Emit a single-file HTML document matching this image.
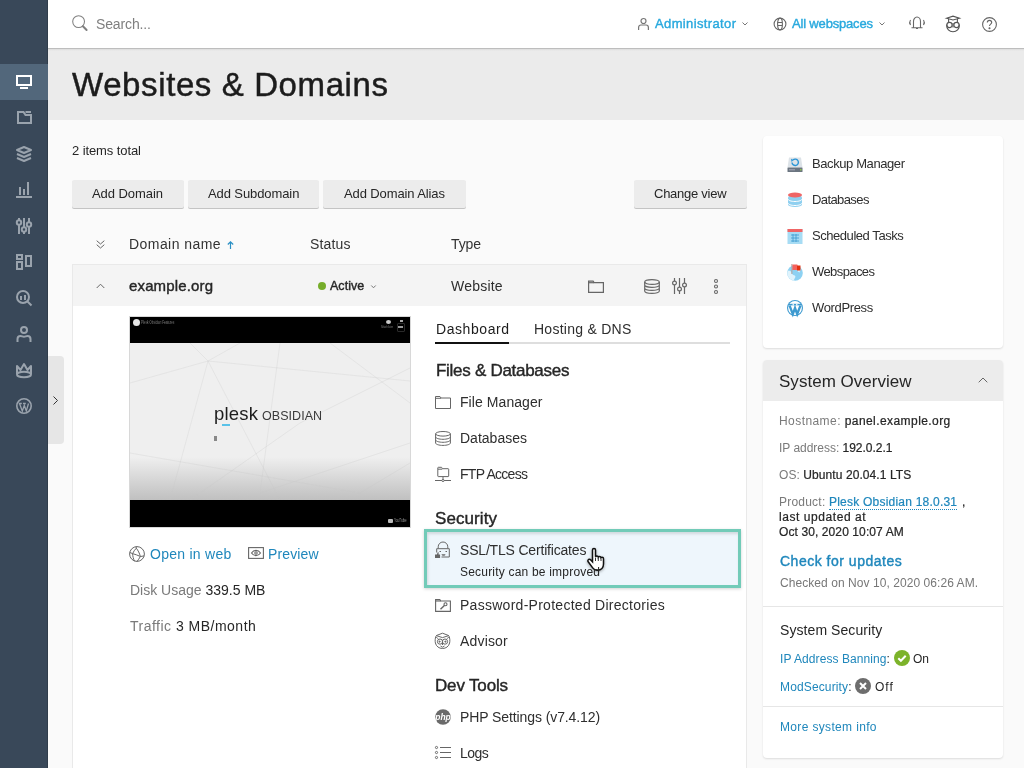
<!DOCTYPE html>
<html><head><meta charset="utf-8">
<style>
*{margin:0;padding:0;box-sizing:border-box}
html,body{width:1024px;height:768px;overflow:hidden;background:#fafafa;font-family:"Liberation Sans",sans-serif}
.a{position:absolute}
.t{position:absolute;white-space:nowrap;will-change:transform;font-family:"Liberation Sans",sans-serif}
svg{position:absolute;overflow:visible}
.btn{position:absolute;top:180px;height:28px;background:#ececec;border-radius:2px;box-shadow:0 1px 0 #c4c4c4}
</style></head><body>
<!-- sidebar -->
<div class="a" style="left:0;top:0;width:48px;height:768px;background:#394859"></div>
<div class="a" style="left:47px;top:0;width:1px;height:768px;background:#303d4b"></div>
<div class="a" style="left:0;top:64px;width:48px;height:36px;background:#52677b"></div>
<!-- sidebar icons -->
<svg style="left:16px;top:74px" width="16" height="16" viewBox="0 0 16 16"><rect x="1" y="2" width="14" height="9" fill="none" stroke="#fff" stroke-width="2"/><rect x="4" y="13" width="8" height="2" fill="#fff"/></svg>
<svg style="left:16px;top:110px" width="16" height="16" viewBox="0 0 16 16" fill="none" stroke="#9aa3ad" stroke-width="2"><path d="M2 2h5.5l2 3H15v8H2z"/><path d="M9.5 2H15" /></svg>
<svg style="left:16px;top:146px" width="16" height="16" viewBox="0 0 16 16" fill="none" stroke="#9aa3ad" stroke-width="2" stroke-linejoin="round"><path d="M8 1L15 4L8 7L1 4z"/><path d="M1 8l7 3l7-3"/><path d="M1 12l7 3l7-3"/></svg>
<svg style="left:16px;top:182px" width="16" height="16" viewBox="0 0 16 16" fill="#9aa3ad"><rect x="0" y="14" width="16" height="2"/><rect x="3" y="5" width="2" height="8"/><rect x="7" y="7" width="2" height="6"/><rect x="11" y="0" width="2" height="13"/></svg>
<svg style="left:16px;top:218px" width="16" height="16" viewBox="0 0 16 16" fill="none" stroke="#9aa3ad" stroke-width="2"><path d="M3 0v2M3 7v9M8 0v9M8 14v2M13 0v4M13 9v7"/><circle cx="3" cy="4.5" r="2.2"/><circle cx="8" cy="11.5" r="2.2"/><circle cx="13" cy="6.5" r="2.2"/></svg>
<svg style="left:16px;top:254px" width="16" height="16" viewBox="0 0 16 16" fill="none" stroke="#9aa3ad" stroke-width="2"><rect x="1" y="1" width="5" height="4"/><rect x="1" y="8" width="5" height="7"/><rect x="10" y="2" width="5" height="10"/></svg>
<svg style="left:16px;top:290px" width="16" height="16" viewBox="0 0 16 16" fill="none" stroke="#9aa3ad" stroke-width="2"><circle cx="7" cy="7" r="6"/><path d="M11.5 11.5L15.5 15.5"/><path d="M5 6v4M9 5v5"/></svg>
<svg style="left:16px;top:326px" width="16" height="16" viewBox="0 0 16 16" fill="none" stroke="#9aa3ad" stroke-width="2"><circle cx="8" cy="4" r="3"/><path d="M1.5 16v-3c0-2 1.5-3 3-3c1.5 0 2 .8 3.5 .8s2-.8 3.5-.8c1.5 0 3 1 3 3v3"/></svg>
<svg style="left:16px;top:362px" width="16" height="16" viewBox="0 0 16 16" fill="none" stroke="#9aa3ad" stroke-width="2" stroke-linejoin="round"><path d="M1 12V4l3.5 4L8 2l3.5 6L15 4v8"/><ellipse cx="8" cy="12.5" rx="7" ry="2.8"/></svg>
<svg style="left:16px;top:398px" width="16" height="16" viewBox="0 0 16 16" fill="none" stroke="#9aa3ad" stroke-width="1.6"><circle cx="8" cy="8" r="7.2"/><path d="M3.5 5.5l2.8 7.5l2-5.5l2 5.5l2.2-7.5M2.8 5.5h3M7 5.5h2.8" stroke-width="1.3"/></svg>
<!-- collapse tab -->
<div class="a" style="left:48px;top:356px;width:16px;height:88px;background:#e6e6e6;border-radius:0 4px 4px 0"></div>
<svg style="left:52.5px;top:396px" width="5" height="9" viewBox="0 0 5 9" fill="none" stroke="#333" stroke-width="1"><path d="M0.5 0.5L4.5 4.5L0.5 8.5"/></svg>

<!-- header -->
<div class="a" style="left:48px;top:0;width:976px;height:48px;background:#fff"></div>
<div class="a" style="left:48px;top:48px;width:976px;height:1px;background:#bdbdbd"></div>
<div class="a" style="left:48px;top:49px;width:976px;height:2px;background:linear-gradient(#dcdcdc,#ebebeb)"></div>
<svg style="left:72px;top:15px" width="16" height="17" viewBox="0 0 16 17" fill="none" stroke="#808080" stroke-width="1.05"><circle cx="6.6" cy="6.6" r="5.9"/><path d="M10.9 11.2L14.6 15" stroke-width="2" stroke-linecap="round"/></svg>
<svg style="left:638px;top:18px" width="11" height="12" viewBox="0 0 11 12" fill="none" stroke="#777" stroke-width="1.2"><circle cx="5.5" cy="3" r="2.5"/><path d="M0.6 12V9.5c0-1.5 1-2.5 2.3-2.5h5.2c1.3 0 2.3 1 2.3 2.5V12"/></svg>
<svg style="left:742px;top:22px" width="6" height="4" viewBox="0 0 6 4" fill="none" stroke="#777" stroke-width="1"><path d="M0.5 0.5L3 3L5.5 0.5"/></svg>
<svg style="left:773px;top:17px" width="14" height="14" viewBox="0 0 14 14" fill="none" stroke="#666" stroke-width="1.1"><circle cx="7" cy="7" r="5.9"/><ellipse cx="7" cy="7" rx="2.4" ry="5.9"/><path d="M4.8 5.5h4.4M4.8 8.5h4.4"/></svg>
<svg style="left:879px;top:22px" width="6" height="4" viewBox="0 0 6 4" fill="none" stroke="#777" stroke-width="1"><path d="M0.5 0.5L3 3L5.5 0.5"/></svg>
<svg style="left:909px;top:16px" width="16" height="14" viewBox="0 0 16 14" fill="none" stroke="#666" stroke-width="1.1"><path d="M4.5 11.5V5.5c0-2.5 1.5-4.5 3.5-4.5s3.5 2 3.5 4.5v6M2.5 11.8h11M7 12.5h2"/><path d="M1.5 4c-1 1.5-1 3.5 0 5M14.5 4c1 1.5 1 3.5 0 5"/></svg>
<svg style="left:945px;top:15px" width="16" height="18" viewBox="0 0 16 18" fill="none" stroke="#555" stroke-width="1.1"><path d="M1.5 3.3L8 1.2l6.5 2.1L8 5z" /><path d="M3.6 4v4M12.4 4v4"/><circle cx="4.5" cy="10" r="2.6"/><circle cx="11.5" cy="10" r="2.6"/><path d="M1.6 9.5c-.2 4.5 2.8 7.3 6.4 7.3s6.6-2.8 6.4-7.3M8 8v4.5" /></svg>
<svg style="left:982px;top:17px" width="15" height="15" viewBox="0 0 15 15" fill="none" stroke="#666" stroke-width="1.1"><circle cx="7.5" cy="7.5" r="6.9"/><path d="M5.3 5.6c0-1.3 1-2.2 2.2-2.2s2.2.9 2.2 2.1c0 1.6-2.2 1.8-2.2 3.6"/><circle cx="7.5" cy="11.2" r=".5" fill="#666"/></svg>

<!-- page header -->
<div class="a" style="left:48px;top:51px;width:976px;height:69px;background:#ebebeb"></div>

<!-- buttons -->
<div class="btn" style="left:72px;width:112px"></div>
<div class="btn" style="left:188px;width:131px"></div>
<div class="btn" style="left:323px;width:143px"></div>
<div class="btn" style="left:634px;width:113px"></div>

<!-- table header -->
<svg style="left:96px;top:240px" width="9" height="9" viewBox="0 0 9 9" fill="none" stroke="#666" stroke-width="1"><path d="M0.7 0.7L4.5 4L8.3 0.7M0.7 4.7L4.5 8L8.3 4.7"/></svg>
<svg style="left:227px;top:241px" width="7" height="8" viewBox="0 0 7 8" fill="none" stroke="#2a8fc4" stroke-width="1.2"><path d="M3.5 8V1M0.8 3.5L3.5 0.8L6.2 3.5"/></svg>

<!-- row -->
<div class="a" style="left:72px;top:264px;width:675px;height:504px;background:#fff;border:1px solid #e9e9e9;border-bottom:none"></div>
<div class="a" style="left:73px;top:265px;width:673px;height:41px;background:#f4f4f4"></div>
<svg style="left:96px;top:283px" width="9" height="6" viewBox="0 0 9 6" fill="none" stroke="#666" stroke-width="1"><path d="M0.7 5L4.5 1.2L8.3 5"/></svg>
<div class="a" style="left:318px;top:282px;width:8px;height:8px;border-radius:50%;background:#76ad2a"></div>
<svg style="left:371px;top:285px" width="5" height="4" viewBox="0 0 5 4" fill="none" stroke="#777" stroke-width="1"><path d="M0.3 0.5L2.5 2.8L4.7 0.5"/></svg>
<svg style="left:588px;top:280px" width="16" height="13" viewBox="0 0 16 13" fill="none" stroke="#666" stroke-width="1.2"><path d="M0.6 1.2h4.5l1 1.5h9.3v9.7H0.6z"/><path d="M0.6 2.7h5.5"/></svg>
<svg style="left:644px;top:279px" width="16" height="15" viewBox="0 0 16 15" fill="none" stroke="#666" stroke-width="1.2"><ellipse cx="8" cy="3" rx="7.3" ry="2.4"/><path d="M0.7 3v9c0 1.3 3.3 2.4 7.3 2.4s7.3-1.1 7.3-2.4V3M0.7 6c0 1.3 3.3 2.4 7.3 2.4s7.3-1.1 7.3-2.4M0.7 9c0 1.3 3.3 2.4 7.3 2.4s7.3-1.1 7.3-2.4"/></svg>
<svg style="left:672px;top:278px" width="16" height="16" viewBox="0 0 16 16" fill="none" stroke="#666" stroke-width="1.2"><path d="M2.5 0v3M2.5 7v9M7.5 0v9M7.5 13v3M12.5 0v5M12.5 9v7"/><circle cx="2.5" cy="5" r="1.9"/><circle cx="7.5" cy="11" r="1.9"/><circle cx="12.5" cy="7" r="1.9"/></svg>
<svg style="left:713px;top:279px" width="6" height="15" viewBox="0 0 6 15" fill="none" stroke="#666" stroke-width="1.1"><circle cx="3" cy="2" r="1.5"/><circle cx="3" cy="7.5" r="1.5"/><circle cx="3" cy="13" r="1.5"/></svg>

<!-- screenshot -->
<div class="a" style="left:129px;top:316px;width:282px;height:212px;background:#d8d8d8"></div>
<div class="a" style="left:130px;top:317px;width:280px;height:210px;background:linear-gradient(#efefef 0px,#efefef 140px,#c0c0c0 183px);overflow:hidden">
  <svg style="left:0;top:26px" width="280" height="157" viewBox="0 0 280 157" fill="none" stroke="rgba(200,200,200,0.45)" stroke-width="0.6"><path d="M0 40L78 18L280 38M78 18L40 157M78 18L150 157M150 0L130 150L280 100M280 25L170 80L60 157M60 0L78 18L110 0M0 110L230 150L280 120M200 0L280 60"/></svg>
  <div class="a" style="left:0;top:0;width:280px;height:26px;background:#000"></div>
  <div class="a" style="left:0;top:183px;width:280px;height:27px;background:#000"></div>
  <div class="a" style="left:2.5px;top:2px;width:7px;height:7px;border-radius:50%;background:#e6e6e6"></div>
  <div class="t" style="left:11px;top:3px;font-size:4.5px;line-height:6px;color:#777;transform-origin:0 0;transform:scaleX(0.68)">Plesk Obsidian Features</div>
  <div class="a" style="left:256px;top:3px;width:5px;height:4px;border-radius:50%;background:#ccc"></div>
  <div class="t" style="left:251px;top:8px;font-size:4px;line-height:4px;color:#777;transform-origin:0 0;transform:scaleX(0.6)">Watch later</div>
  <div class="a" style="left:266.5px;top:6px;width:8px;height:9px;border:1px solid #2a2a2a;border-radius:1px"></div>
  <div class="a" style="left:268px;top:9px;width:5px;height:2px;background:#999"></div>
  <div class="a" style="left:270px;top:3px;width:3px;height:2px;background:#aaa"></div>
  <div class="a" style="left:258px;top:202px;width:5px;height:4px;background:#bbb;border-radius:1px"></div>
  <div class="t" style="left:263.5px;top:201px;font-size:4.5px;line-height:6px;color:#999;transform-origin:0 0;transform:scaleX(0.7)">YouTube</div>
  <div class="t" style="left:83.6px;top:86.4px;font-size:18.5px;line-height:21px;color:#1d1d1d;letter-spacing:0.2px">plesk</div>
  <div class="t" style="left:131.5px;top:92px;font-size:12.5px;line-height:14px;color:#3a3a3a;letter-spacing:0.05px">OBSIDIAN</div>
  <div class="a" style="left:92px;top:107px;width:8px;height:2px;background:#5ac2e8"></div>
  <div class="a" style="left:84px;top:119px;width:3px;height:5px;background:#888"></div>
</div>

<!-- expanded links icons -->
<svg style="left:129px;top:546px" width="16" height="16" viewBox="0 0 16 16" fill="none" stroke="#666" stroke-width="1"><circle cx="8" cy="8" r="7.4"/><path d="M7.3 2.2C5.8 3.8 4.5 5.5 3.6 7.6M7.3 2.2c1.8 2.2 3.2 5 4.1 8.3M3.6 7.6c2.6.7 5.2 1.7 7.8 2.9M11.4 10.5l3.8-.6M3.6 7.6L.8 6.5M7.3 2.2L7.1.7M3.6 7.6c.1 2.8.8 5.4 2 7.6M11.4 10.5c-1.2 2-2.4 3.7-3.4 4.9"/></svg>
<svg style="left:248px;top:547px" width="16" height="12" viewBox="0 0 16 12" fill="none" stroke="#666" stroke-width="1.1"><rect x="0.6" y="0.6" width="14.8" height="10.8"/><path d="M3.5 6c1.2-1.8 2.7-2.6 4.5-2.6s3.3.8 4.5 2.6c-1.2 1.8-2.7 2.6-4.5 2.6S4.7 7.8 3.5 6z"/><circle cx="8" cy="6" r="1.2"/></svg>

<!-- tabs -->
<div class="a" style="left:435px;top:342px;width:295px;height:2px;background:#dedede"></div>
<div class="a" style="left:435px;top:342px;width:74px;height:2px;background:#111"></div>

<!-- section icons -->
<svg style="left:435px;top:396px" width="16" height="13" viewBox="0 0 16 13" fill="none" stroke="#666" stroke-width="1"><path d="M0.5 0.5h4.5l1 1.5h9.5v10.5H0.5z"/><path d="M0.5 2.3h5.5"/></svg>
<svg style="left:435px;top:431px" width="16" height="15" viewBox="0 0 16 15" fill="none" stroke="#666" stroke-width="1"><ellipse cx="8" cy="2.8" rx="7.4" ry="2.3"/><path d="M0.6 2.8v9.2c0 1.3 3.3 2.4 7.4 2.4s7.4-1.1 7.4-2.4V2.8M0.6 5.9c0 1.3 3.3 2.4 7.4 2.4s7.4-1.1 7.4-2.4M0.6 8.9c0 1.3 3.3 2.4 7.4 2.4s7.4-1.1 7.4-2.4"/></svg>
<svg style="left:435px;top:466px" width="16" height="16" viewBox="0 0 16 16" fill="none" stroke="#666" stroke-width="1"><path d="M2.8 3.2V1.8c0-.3.2-.5.5-.5h3.3l.8 1.4h5.8c.3 0 .5.2.5.5v6.9c0 .3-.2.5-.5.5H3.3c-.3 0-.5-.2-.5-.5z"/><path d="M2.8 3.2h4.4"/><path d="M8 10.6v3M0 14.5h6.9M9.1 14.5H16"/><circle cx="8" cy="14.5" r="1.1"/></svg>
<!-- highlight -->
<div class="a" style="left:424px;top:529px;width:317px;height:59px;border:3px solid #72cbb8;background:#eef6fc;box-shadow:0 1px 3px rgba(0,0,0,.18), inset 1px 2px 3px rgba(0,0,0,.12)"></div>
<svg style="left:434px;top:541px" width="16" height="18" viewBox="0 0 16 18" fill="none" stroke="#666" stroke-width="1"><path d="M4.2 7.3V5.8a4.8 4.8 0 0 1 9.6 0v1.5"/><path d="M2.7 11.5V7.7h12.6v8.3H7.5"/><path d="M5.5 10.5h1.5M11.5 10.5h1.5"/><path d="M7.5 13.3h4a2 1.5 0 0 1-4 0z" fill="#666" stroke="none"/><path d="M1 13.5h1.8l1-2.2h.8v2.2h1.5v3.5H1z" fill="#666" stroke="none"/></svg>
<!-- cursor -->
<svg style="left:587px;top:548px;filter:drop-shadow(0 1px 1.5px rgba(0,0,0,.35))" width="19" height="23" viewBox="0 0 19 23"><path d="M5.5 2c0-1 .7-1.5 1.5-1.5s1.5.5 1.5 1.5v6.8c.3-.6.8-.9 1.4-.9.8 0 1.3.5 1.4 1.2.3-.5.7-.7 1.3-.7.8 0 1.3.6 1.4 1.3.3-.3.6-.5 1.1-.5.8 0 1.4.7 1.4 1.5v5.3c0 3.5-2.4 6.2-5.8 6.2H10c-2 0-3.3-.9-4.3-2.3L1.2 13.8c-.6-.8-.4-1.8.3-2.3.8-.5 1.7-.3 2.3.4l1.7 1.9z" fill="#fff" stroke="#111" stroke-width="1.5"/><path d="M8.5 9.5v3.5M11.3 10v3M14 10.5v2.5" stroke="#333" stroke-width="1"/></svg>
<svg style="left:435px;top:599px" width="16" height="13" viewBox="0 0 16 13" fill="none" stroke="#666" stroke-width="1.1"><path d="M0.6 12.4V0.6h4.2l1 1.4h9.6v10.4z"/><path d="M0.6 2h5.2"/><circle cx="10.5" cy="5.3" r="1.5"/><path d="M9.4 6.4L5.5 10.3" stroke-width="1.4"/></svg>
<svg style="left:434px;top:632px" width="17" height="17" viewBox="0 0 17 17" fill="none" stroke="#666" stroke-width="1"><path d="M2.2 3.6L8.5 1.2l6.3 2.4L8.5 5.6z"/><path d="M1.8 4.5c-.6 2-.9 4.3-.4 6.5.8 3.4 3.6 5.5 7.1 5.5s6.3-2.1 7.1-5.5c.5-2.2.2-4.5-.4-6.5"/><path d="M1.8 4.5l2.2 2.3M15.2 4.5L13 6.8"/><circle cx="6" cy="9.6" r="2.6"/><circle cx="11" cy="9.6" r="2.6"/><circle cx="5.6" cy="9.6" r=".6" fill="#666"/><circle cx="11.4" cy="9.6" r=".6" fill="#666"/><path d="M8.5 9.5v3.5"/><path d="M6.5 14l2 1.2 2-1.2"/></svg>
<svg style="left:435px;top:709px" width="16" height="16" viewBox="0 0 16 16"><circle cx="8" cy="8" r="7.8" fill="#6a6a6a"/><text x="8" y="11.3" text-anchor="middle" font-family="Liberation Sans" font-size="9.5" font-weight="bold" font-style="italic" fill="#fff" textLength="15.5" lengthAdjust="spacingAndGlyphs">php</text></svg>
<svg style="left:435px;top:746px" width="16" height="13" viewBox="0 0 16 13" fill="none" stroke="#666" stroke-width="1"><circle cx="1.5" cy="1.5" r="1.1"/><circle cx="1.5" cy="6.5" r="1.1"/><circle cx="1.5" cy="11.5" r="1.1"/><path d="M5 1.5h11M5 6.5h11M5 11.5h11"/></svg>

<!-- right card 1 -->
<div class="a" style="left:763px;top:136px;width:240px;height:212px;background:#fff;border-radius:4px;box-shadow:0 1px 2px rgba(0,0,0,.12)"></div>
<svg style="left:787px;top:156px" width="16" height="16" viewBox="0 0 16 16"><path d="M2 1.5h12l1.5 10H.5z" fill="#dde3e8"/><rect x="0.5" y="11.5" width="15" height="4.5" rx="0.5" fill="#6b7580"/><rect x="13" y="13" width="1.5" height="1.5" fill="#8bc34a"/><rect x="2" y="13.3" width="6" height="1" fill="#aab"/><path d="M5 6.5a3.2 3.2 0 1 0 1-2.5" fill="none" stroke="#2b95d6" stroke-width="1.4"/><path d="M4 2.8l2.5 1.3l-2 1.8z" fill="#2b95d6"/></svg>
<svg style="left:787px;top:192px" width="16" height="16" viewBox="0 0 16 16"><rect x="1" y="3" width="14" height="12" rx="7" ry="2.5" fill="#8fd0f0"/><path d="M1 7c0 1.4 3.1 2.5 7 2.5s7-1.1 7-2.5M1 11c0 1.4 3.1 2.5 7 2.5s7-1.1 7-2.5" fill="none" stroke="#fff" stroke-width="1"/><ellipse cx="8" cy="3" rx="7" ry="2.5" fill="#f06565"/></svg>
<svg style="left:787px;top:228px" width="16" height="16" viewBox="0 0 16 16"><rect x="0.5" y="1" width="15" height="15" fill="#a7dcf4"/><rect x="0.5" y="1" width="15" height="3" fill="#f06565"/><path d="M4 7h8M4 10h8M4 13h8M6 6v8M9 6v8" stroke="#3a9bd0" stroke-width="0.8"/></svg>
<svg style="left:787px;top:264px" width="16" height="17" viewBox="0 0 16 17"><circle cx="8" cy="9" r="7.8" fill="#8dd1f2"/><path d="M1.5 6.5c1.5.2 3 1 3.3 2.5.3 1.6 1.8 2 3 2.6 1 .6.6 2.2-.3 3.1-.6.7-.4 1.5.2 2.1C4 16.6.6 13.2.3 9.5c-.1-1 .3-2.2 1.2-3zM10.5 3.5c1.5.5 2.8 1.2 3.5 2.5-.8.4-1.6 1.5-1.2 2.6-.8-.5-1.8-.6-2.3-1.5-.4-.8.3-1.6 0-3.6z" fill="#dff3fc"/><rect x="4.3" y="0" width="1.1" height="10" fill="#b5a9a5"/><path d="M5.4 0.5h5v5.5h-5z" fill="#f4625d"/><path d="M10 1.5h3.5v5H10z" fill="#e2300e"/></svg>
<svg style="left:787px;top:300px" width="16" height="16" viewBox="0 0 16 16"><circle cx="8" cy="8" r="8" fill="#3d9ad0"/><circle cx="8" cy="8" r="6.9" fill="#fff"/><path d="M2.6 5.6l3.2 8.6 2.2-6.2 2.2 6.2 3.2-8.6" fill="none" stroke="#3d9ad0" stroke-width="2.3"/><path d="M1.5 4.6h13" stroke="#3d9ad0" stroke-width="1.6"/><path d="M5.6 4.6h1.2M9.2 4.6h1.2" stroke="#fff" stroke-width="1.8"/></svg>

<!-- card 2 -->
<div class="a" style="left:763px;top:360px;width:240px;height:398px;background:#fff;border-radius:4px;box-shadow:0 1px 2px rgba(0,0,0,.12);overflow:hidden">
  <div class="a" style="left:0;top:0;width:240px;height:41px;background:#ececec"></div>
  <div class="a" style="left:0;top:246px;width:240px;height:1px;background:#e6e6e6"></div>
  <div class="a" style="left:0;top:346px;width:240px;height:1px;background:#e6e6e6"></div>
</div>
<svg style="left:978px;top:377px" width="10" height="6" viewBox="0 0 10 6" fill="none" stroke="#666" stroke-width="1"><path d="M0.7 5.3L5 1L9.3 5.3"/></svg>
<svg style="left:894px;top:650px" width="16" height="16" viewBox="0 0 16 16"><circle cx="8" cy="8" r="8" fill="#7cb32a"/><path d="M4.3 8.2l2.6 2.6l4.8-5" fill="none" stroke="#fff" stroke-width="2"/></svg>
<svg style="left:855px;top:678px" width="16" height="16" viewBox="0 0 16 16"><circle cx="8" cy="8" r="8" fill="#6d6d6d"/><path d="M5 5l6 6M11 5l-6 6" fill="none" stroke="#fff" stroke-width="2"/></svg>

<div class="t" style="left:96.0px;top:16.0px;font-size:14px;line-height:16px;letter-spacing:-0.128px;"><span style="font-weight:400;color:#7f7f7f;">Search...</span></div>
<div class="t" style="left:655.0px;top:16.0px;font-size:13px;line-height:15px;letter-spacing:0.368px;"><span style="font-weight:400;color:#28a9de;-webkit-text-stroke:0.4px #28a9de;">Administrator</span></div>
<div class="t" style="left:792.0px;top:16.0px;font-size:13px;line-height:15px;letter-spacing:-0.175px;"><span style="font-weight:400;color:#28a9de;-webkit-text-stroke:0.4px #28a9de;">All webspaces</span></div>
<div class="t" style="left:72.0px;top:66.0px;font-size:33px;line-height:37px;letter-spacing:0.608px;"><span style="font-weight:400;color:#1c1c1c;-webkit-text-stroke:0.45px #1c1c1c;">Websites &amp; Domains</span></div>
<div class="t" style="left:72.0px;top:143.0px;font-size:13px;line-height:15px;letter-spacing:-0.090px;"><span style="font-weight:400;color:#262626;">2 items total</span></div>
<div class="t" style="left:92.0px;top:186.0px;font-size:13px;line-height:15px;letter-spacing:-0.060px;"><span style="font-weight:400;color:#262626;">Add Domain</span></div>
<div class="t" style="left:207.6px;top:186.0px;font-size:13px;line-height:15px;letter-spacing:-0.093px;"><span style="font-weight:400;color:#262626;">Add Subdomain</span></div>
<div class="t" style="left:343.8px;top:186.0px;font-size:13px;line-height:15px;letter-spacing:-0.115px;"><span style="font-weight:400;color:#262626;">Add Domain Alias</span></div>
<div class="t" style="left:654.4px;top:186.0px;font-size:13px;line-height:15px;letter-spacing:-0.256px;"><span style="font-weight:400;color:#262626;">Change view</span></div>
<div class="t" style="left:129.4px;top:236.0px;font-size:14px;line-height:16px;letter-spacing:0.445px;"><span style="font-weight:400;color:#333;">Domain name</span></div>
<div class="t" style="left:310.0px;top:236.0px;font-size:14px;line-height:16px;letter-spacing:0.142px;"><span style="font-weight:400;color:#333;">Status</span></div>
<div class="t" style="left:450.8px;top:236.0px;font-size:14px;line-height:16px;letter-spacing:-0.117px;"><span style="font-weight:400;color:#333;">Type</span></div>
<div class="t" style="left:129.4px;top:277.0px;font-size:15px;line-height:17px;letter-spacing:0.146px;"><span style="font-weight:400;color:#262626;-webkit-text-stroke:0.4px #262626;">example.org</span></div>
<div class="t" style="left:330.3px;top:279.0px;font-size:12.5px;line-height:14px;letter-spacing:0.032px;"><span style="font-weight:400;color:#262626;-webkit-text-stroke:0.4px #262626;">Active</span></div>
<div class="t" style="left:450.5px;top:277.5px;font-size:14px;line-height:16px;letter-spacing:0.213px;"><span style="font-weight:400;color:#2e2e2e;">Website</span></div>
<div class="t" style="left:149.7px;top:546.0px;font-size:14px;line-height:16px;letter-spacing:0.269px;"><span style="font-weight:400;color:#1f87bc;">Open in web</span></div>
<div class="t" style="left:268.0px;top:546.0px;font-size:14px;line-height:16px;letter-spacing:0.118px;"><span style="font-weight:400;color:#1f87bc;">Preview</span></div>
<div class="t" style="left:129.6px;top:582.0px;font-size:14px;line-height:16px;letter-spacing:0.000px;"><span style="font-weight:400;color:#7a7a7a;">Disk Usage </span><span style="font-weight:400;color:#262626;">339.5 MB</span></div>
<div class="t" style="left:129.6px;top:617.6px;font-size:14px;line-height:16px;letter-spacing:0.489px;"><span style="font-weight:400;color:#7a7a7a;">Traffic </span><span style="font-weight:400;color:#262626;">3 MB/month</span></div>
<div class="t" style="left:436.0px;top:321.0px;font-size:14px;line-height:16px;letter-spacing:0.564px;"><span style="font-weight:400;color:#1c1c1c;">Dashboard</span></div>
<div class="t" style="left:533.8px;top:321.0px;font-size:14px;line-height:16px;letter-spacing:0.263px;"><span style="font-weight:400;color:#2e2e2e;">Hosting &amp; DNS</span></div>
<div class="t" style="left:436.0px;top:361.3px;font-size:17px;line-height:19px;letter-spacing:-0.284px;"><span style="font-weight:400;color:#262626;-webkit-text-stroke:0.4px #262626;">Files &amp; Databases</span></div>
<div class="t" style="left:460.0px;top:394.0px;font-size:14px;line-height:16px;letter-spacing:0.072px;"><span style="font-weight:400;color:#2e2e2e;">File Manager</span></div>
<div class="t" style="left:460.0px;top:430.0px;font-size:14px;line-height:16px;letter-spacing:0.009px;"><span style="font-weight:400;color:#2e2e2e;">Databases</span></div>
<div class="t" style="left:460.0px;top:466.0px;font-size:14px;line-height:16px;letter-spacing:-0.717px;"><span style="font-weight:400;color:#2e2e2e;">FTP Access</span></div>
<div class="t" style="left:435.2px;top:509.0px;font-size:17px;line-height:19px;letter-spacing:0.084px;"><span style="font-weight:400;color:#262626;-webkit-text-stroke:0.4px #262626;">Security</span></div>
<div class="t" style="left:459.6px;top:542.0px;font-size:14px;line-height:16px;letter-spacing:-0.186px;"><span style="font-weight:400;color:#2e2e2e;">SSL/TLS Certificates</span></div>
<div class="t" style="left:459.6px;top:565.0px;font-size:12px;line-height:14px;letter-spacing:0.200px;"><span style="font-weight:400;color:#262626;">Security can be improved</span></div>
<div class="t" style="left:459.8px;top:597.0px;font-size:14px;line-height:16px;letter-spacing:0.271px;"><span style="font-weight:400;color:#2e2e2e;">Password-Protected Directories</span></div>
<div class="t" style="left:459.8px;top:633.0px;font-size:14px;line-height:16px;letter-spacing:0.170px;"><span style="font-weight:400;color:#2e2e2e;">Advisor</span></div>
<div class="t" style="left:435.4px;top:676.0px;font-size:17px;line-height:19px;letter-spacing:-0.155px;"><span style="font-weight:400;color:#262626;-webkit-text-stroke:0.4px #262626;">Dev Tools</span></div>
<div class="t" style="left:459.8px;top:709.0px;font-size:14px;line-height:16px;letter-spacing:-0.095px;"><span style="font-weight:400;color:#2e2e2e;">PHP Settings (v7.4.12)</span></div>
<div class="t" style="left:459.8px;top:744.6px;font-size:14px;line-height:16px;letter-spacing:-0.553px;"><span style="font-weight:400;color:#2e2e2e;">Logs</span></div>
<div class="t" style="left:811.6px;top:156.0px;font-size:13px;line-height:15px;letter-spacing:-0.406px;"><span style="font-weight:400;color:#2e2e2e;">Backup Manager</span></div>
<div class="t" style="left:811.6px;top:192.0px;font-size:13px;line-height:15px;letter-spacing:-0.594px;"><span style="font-weight:400;color:#2e2e2e;">Databases</span></div>
<div class="t" style="left:811.6px;top:228.0px;font-size:13px;line-height:15px;letter-spacing:-0.449px;"><span style="font-weight:400;color:#2e2e2e;">Scheduled Tasks</span></div>
<div class="t" style="left:811.6px;top:264.0px;font-size:13px;line-height:15px;letter-spacing:-0.586px;"><span style="font-weight:400;color:#2e2e2e;">Webspaces</span></div>
<div class="t" style="left:811.6px;top:300.0px;font-size:13px;line-height:15px;letter-spacing:-0.357px;"><span style="font-weight:400;color:#2e2e2e;">WordPress</span></div>
<div class="t" style="left:779.2px;top:371.7px;font-size:17px;line-height:19px;letter-spacing:0.025px;"><span style="font-weight:400;color:#262626;">System Overview</span></div>
<div class="t" style="left:779.4px;top:414.0px;font-size:12px;line-height:14px;letter-spacing:0.431px;"><span style="font-weight:400;color:#7a7a7a;">Hostname: </span><span style="font-weight:400;color:#262626;-webkit-text-stroke:0.22px #262626;">panel.example.org</span></div>
<div class="t" style="left:779.4px;top:441.0px;font-size:12px;line-height:14px;letter-spacing:-0.024px;"><span style="font-weight:400;color:#7a7a7a;">IP address: </span><span style="font-weight:400;color:#262626;-webkit-text-stroke:0.22px #262626;">192.0.2.1</span></div>
<div class="t" style="left:779.4px;top:468.0px;font-size:12px;line-height:14px;letter-spacing:0.080px;"><span style="font-weight:400;color:#7a7a7a;">OS: </span><span style="font-weight:400;color:#262626;-webkit-text-stroke:0.22px #262626;">Ubuntu 20.04.1 LTS</span></div>
<div class="t" style="left:779.4px;top:495.0px;font-size:12px;line-height:14px;letter-spacing:0.219px;"><span style="font-weight:400;color:#7a7a7a;">Product: </span><span style="font-weight:400;color:#1f87bc;-webkit-text-stroke:0.22px #1f87bc;border-bottom:1px dotted #1f87bc;">Plesk Obsidian 18.0.31</span></div>
<div class="t" style="left:962.0px;top:495.0px;font-size:12px;line-height:14px;letter-spacing:0.000px;"><span style="font-weight:400;color:#262626;-webkit-text-stroke:0.22px #262626;">,</span></div>
<div class="t" style="left:779.4px;top:509.6px;font-size:12px;line-height:14px;letter-spacing:0.562px;"><span style="font-weight:400;color:#262626;-webkit-text-stroke:0.22px #262626;">last updated at</span></div>
<div class="t" style="left:779.4px;top:524.5px;font-size:12px;line-height:14px;letter-spacing:0.099px;"><span style="font-weight:400;color:#262626;-webkit-text-stroke:0.22px #262626;">Oct 30, 2020 10:07 AM</span></div>
<div class="t" style="left:779.5px;top:553.3px;font-size:14px;line-height:16px;letter-spacing:0.505px;"><span style="font-weight:400;color:#1f87bc;-webkit-text-stroke:0.4px #1f87bc;">Check for updates</span></div>
<div class="t" style="left:779.5px;top:576.3px;font-size:12px;line-height:14px;letter-spacing:0.060px;"><span style="font-weight:400;color:#777;">Checked on Nov 10, 2020 06:26 AM.</span></div>
<div class="t" style="left:779.5px;top:621.5px;font-size:14px;line-height:16px;letter-spacing:0.076px;"><span style="font-weight:400;color:#262626;">System Security</span></div>
<div class="t" style="left:779.5px;top:652.0px;font-size:12px;line-height:14px;letter-spacing:0.078px;"><span style="font-weight:400;color:#1f87bc;">IP Address Banning</span><span style="font-weight:400;color:#262626;">:</span></div>
<div class="t" style="left:913.2px;top:652.0px;font-size:12px;line-height:14px;letter-spacing:-0.208px;"><span style="font-weight:400;color:#262626;">On</span></div>
<div class="t" style="left:779.5px;top:680.0px;font-size:12px;line-height:14px;letter-spacing:0.134px;"><span style="font-weight:400;color:#1f87bc;">ModSecurity</span><span style="font-weight:400;color:#262626;">:</span></div>
<div class="t" style="left:874.5px;top:680.0px;font-size:12px;line-height:14px;letter-spacing:1.007px;"><span style="font-weight:400;color:#262626;">Off</span></div>
<div class="t" style="left:779.5px;top:720.3px;font-size:12px;line-height:14px;letter-spacing:0.343px;"><span style="font-weight:400;color:#1f87bc;">More system info</span></div>
</body></html>
